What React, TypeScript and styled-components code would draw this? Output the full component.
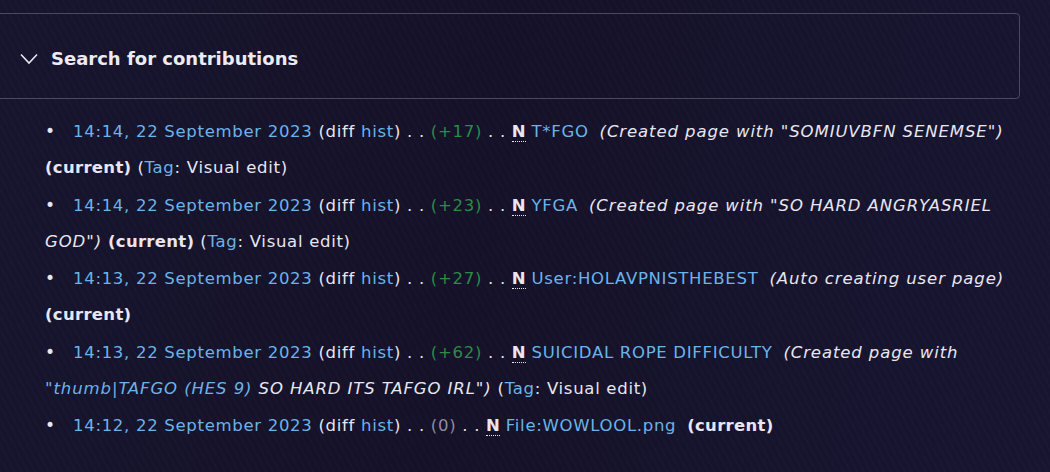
import styled, { createGlobalStyle } from "styled-components";

const GlobalStyle = createGlobalStyle`
  html, body {
    margin: 0;
    padding: 0;
    background: #15122a;
  }
  body {
    font-family: 'DejaVu Sans', 'Liberation Sans', sans-serif;
    color: #e8e6f0;
  }
`;

const Page = styled.div`
  width: 1050px;
  height: 472px;
  overflow: hidden;
  background:
    repeating-linear-gradient(62deg, rgba(255,255,255,0.012) 0px, rgba(255,255,255,0.012) 2px, transparent 2px, transparent 6px),
    linear-gradient(100deg, #17142e 0%, #141128 45%, #181531 100%);
  padding-top: 13px;
  box-sizing: border-box;
`;

const Collapsible = styled.div`
  margin-left: -10px;
  width: 1030px;
  height: 86px;
  box-sizing: border-box;
  border: 1px solid #4b4860;
  border-radius: 4px;
  display: flex;
  align-items: center;
  gap: 13px;
  padding: 5px 0 0 29px;
`;

const Title = styled.h2`
  margin: 0;
  font-family: 'DejaVu Sans', 'Liberation Sans', sans-serif;
  font-size: 18px;
  font-weight: 700;
  color: #eceaf2;
`;

const List = styled.ul`
  list-style: none;
  margin: 14px 0 0 45px;
  padding: 0;
  width: 972px;
`;

const Item = styled.li`
  font-size: 16.5px;
  letter-spacing: 0.7px;
  line-height: 36px;
  margin-bottom: 0.5px;
`;

const Bullet = styled.span`
  display: inline-block;
  width: 28px;
  font-size: 17px;
  letter-spacing: 0;
`;

const Link = styled.span<{ $italic?: boolean }>`
  color: #6cb3ea;
  font-style: ${(p) => (p.$italic ? "italic" : "normal")};
`;

const Delta = styled.span<{ $zero?: boolean }>`
  color: ${(p) => (p.$zero ? "#8f8c9c" : "#2a8c45")};
`;

const New = styled.abbr`
  font-weight: 700;
  letter-spacing: 0;
  text-decoration: none;
  border-bottom: 1px dotted #e8e6f0;
`;

const Comment = styled.span`
  font-style: italic;
  letter-spacing: 0.9px;
  margin-left: 5px;
`;

const Current = styled.b<{ $gap?: boolean }>`
  font-weight: 700;
  letter-spacing: 0.3px;
  margin-left: ${(p) => (p.$gap ? "5px" : "0")};
`;

type Entry = {
  time: string;
  delta: string;
  page: string;
  comment?: React.ReactNode;
  current?: boolean;
  tag?: boolean;
};

const entries: Entry[] = [
  {
    time: "14:14, 22 September 2023",
    delta: "+17",
    page: "T*FGO",
    comment: <>(Created page with "SOMIUVBFN SENEMSE")</>,
    current: true,
    tag: true,
  },
  {
    time: "14:14, 22 September 2023",
    delta: "+23",
    page: "YFGA",
    comment: <>(Created page with "SO HARD ANGRYASRIEL GOD")</>,
    current: true,
    tag: true,
  },
  {
    time: "14:13, 22 September 2023",
    delta: "+27",
    page: "User:HOLAVPNISTHEBEST",
    comment: <>(Auto creating user page)</>,
    current: true,
  },
  {
    time: "14:13, 22 September 2023",
    delta: "+62",
    page: "SUICIDAL ROPE DIFFICULTY",
    comment: (
      <>
        (Created page with <Link $italic>"thumb|TAFGO (HES 9)</Link> SO HARD ITS TAFGO IRL")
      </>
    ),
    tag: true,
  },
  {
    time: "14:12, 22 September 2023",
    delta: "0",
    page: "File:WOWLOOL.png",
    current: true,
  },
];

const Chevron = () => (
  <svg width="18" height="12" viewBox="0 0 18 12" fill="none">
    <path d="M1 1.5 L9 10 L17 1.5" stroke="#e8e6f0" strokeWidth="1.6" />
  </svg>
);

const App = () => {
  return (
    <Page>
      <GlobalStyle />
      <Collapsible>
        <Chevron />
        <Title>Search for contributions</Title>
      </Collapsible>
      <List>
        {entries.map((e, i) => (
          <Item key={i}>
            <Bullet>•</Bullet>
            <Link>{e.time}</Link> (diff <Link>hist</Link>) . .{" "}
            <Delta $zero={e.delta === "0"}>({e.delta})</Delta> . .{" "}
            <New title="This edit created a new page">N</New> <Link>{e.page}</Link>{" "}
            {e.comment && <Comment>{e.comment}</Comment>}
            {e.current && (
              <>
                {" "}
                <Current $gap={!e.comment}>(current)</Current>
              </>
            )}
            {e.tag && (
              <>
                {" "}(<Link>Tag</Link>: Visual edit)
              </>
            )}
          </Item>
        ))}
      </List>
    </Page>
  );
};

export default App;
